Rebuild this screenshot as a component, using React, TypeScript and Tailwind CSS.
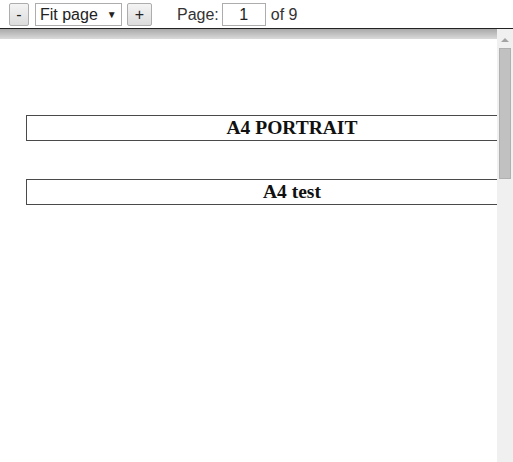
import React from "react";

export default function App() {
  return (
    <div className="w-[513px] h-[462px] bg-white overflow-hidden flex flex-col" style={{ fontFamily: '"Liberation Sans", Arial, sans-serif' }}>
      {/* toolbar */}
      <div className="h-[28px] flex items-start pt-[3px] text-[16px] text-[#222]">
        <div className="ml-[9px] w-[20px] h-[23px] border border-[#adadad] rounded-[2px] bg-gradient-to-b from-[#f4f4f4] to-[#dcdcdc] flex items-center justify-center leading-none">-</div>
        <div className="ml-[6px] w-[87px] h-[23px] border border-[#adadad] bg-white flex items-center pl-[4px] leading-none">
          <span>Fit page</span>
          <span className="ml-[9px] text-[10px]">▼</span>
        </div>
        <div className="ml-[5px] w-[25px] h-[23px] border border-[#adadad] rounded-[2px] bg-gradient-to-b from-[#f4f4f4] to-[#dcdcdc] flex items-center justify-center leading-none">+</div>
        <span className="ml-[25px] h-[23px] flex items-center leading-none text-[#333]">Page:</span>
        <div className="ml-[3px] w-[44px] h-[23px] border border-[#adadad] bg-white flex items-center justify-center leading-none">1</div>
        <span className="ml-[5px] h-[23px] flex items-center leading-none text-[#333]">of 9</span>
      </div>
      <div className="flex-1 flex border-t border-[#222]">
        <div className="flex-1 overflow-hidden flex flex-col">
          <div className="h-[10px] bg-gradient-to-b from-[#a9a9a9] to-[#dadada]" />
          <div className="pl-[26px] pt-[76px]" style={{ fontFamily: '"Liberation Serif", "Times New Roman", serif' }}>
            <div className="w-[532px] h-[26px] border border-[#4a4a4a] flex items-center justify-center font-bold text-[19.5px] text-[#111] leading-none">A4 PORTRAIT</div>
            <div className="mt-[38px] w-[532px] h-[26px] border border-[#4a4a4a] flex items-center justify-center font-bold text-[19.5px] text-[#111] leading-none">A4 test</div>
          </div>
        </div>
        <div className="w-[16px] bg-[#f0f0f0] flex flex-col items-center">
          <div className="mt-[9px] w-0 h-0 border-l-[4px] border-r-[4px] border-b-[4px] border-l-transparent border-r-transparent border-b-[#a3a3a3]" />
          <div className="mt-[6px] w-[12px] h-[131px] bg-[#c1c1c1] border border-[#b0b0b0]" />
        </div>
      </div>
    </div>
  );
}
